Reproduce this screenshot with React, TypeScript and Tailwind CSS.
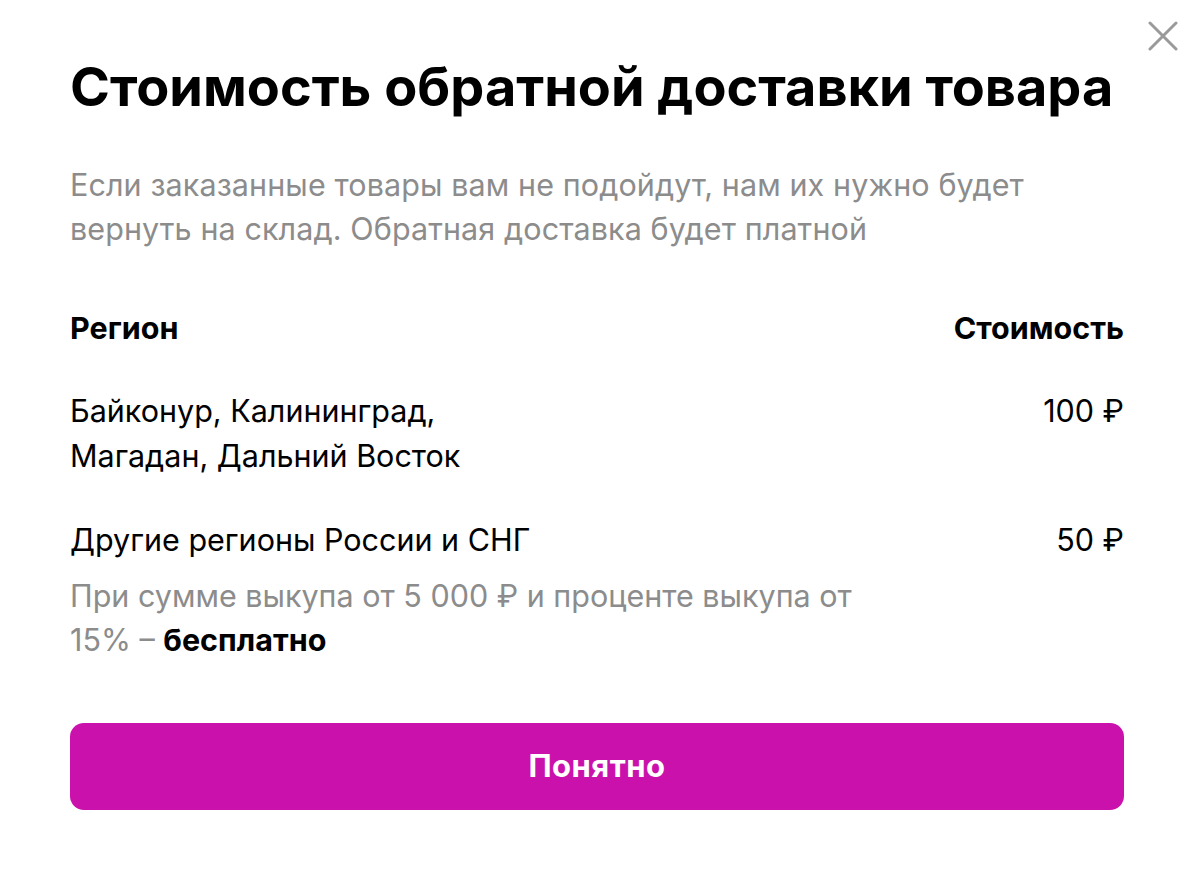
import React from "react";

export default function App() {
  return (
    <div className="relative w-[1200px] h-[878px] bg-white text-black" style={{ fontFamily: "Inter, 'Noto Sans', sans-serif" }}>
      <button className="absolute right-[22px] top-[21px] w-[30px] h-[30px] flex items-center justify-center">
        <svg width="30" height="30" viewBox="0 0 30 30" fill="none">
          <path d="M2 2L28 28M28 2L2 28" stroke="#9a9a9a" strokeWidth="3" strokeLinecap="round" />
        </svg>
      </button>
      <div className="pl-[70px] pr-[76px] pt-[56px]">
        <h1 className="text-[54px] leading-[62px] font-bold whitespace-nowrap">Стоимость обратной доставки товара</h1>
        <p className="mt-[45px] text-[30.5px] leading-[44px] text-[#8c8c8c] tracking-[0.1px]">
          Если заказанные товары вам не подойдут, нам их нужно будет
          <br />
          вернуть на склад. Обратная доставка будет платной
        </p>
        <div className="mt-[55px] flex justify-between text-[30.5px] leading-[44px] font-bold">
          <span>Регион</span>
          <span>Стоимость</span>
        </div>
        <div className="mt-[38px] flex justify-between text-[30.5px] leading-[45px]">
          <span>
            Байконур, Калининград,
            <br />
            Магадан, Дальний Восток
          </span>
          <span>100 ₽</span>
        </div>
        <div className="mt-[40px] flex justify-between text-[30.5px] leading-[44px]">
          <span>Другие регионы России и СНГ</span>
          <span>50 ₽</span>
        </div>
        <p className="mt-[12px] text-[30.5px] leading-[44px] text-[#8c8c8c]">
          При сумме выкупа от 5 000 ₽ и проценте выкупа от
          <br />
          15% – <span className="font-bold text-black">бесплатно</span>
        </p>
        <button className="mt-[61px] w-full h-[87px] rounded-[14px] bg-[#cb11ab] text-white text-[31px] font-bold tracking-[0.5px]">
          Понятно
        </button>
      </div>
    </div>
  );
}
